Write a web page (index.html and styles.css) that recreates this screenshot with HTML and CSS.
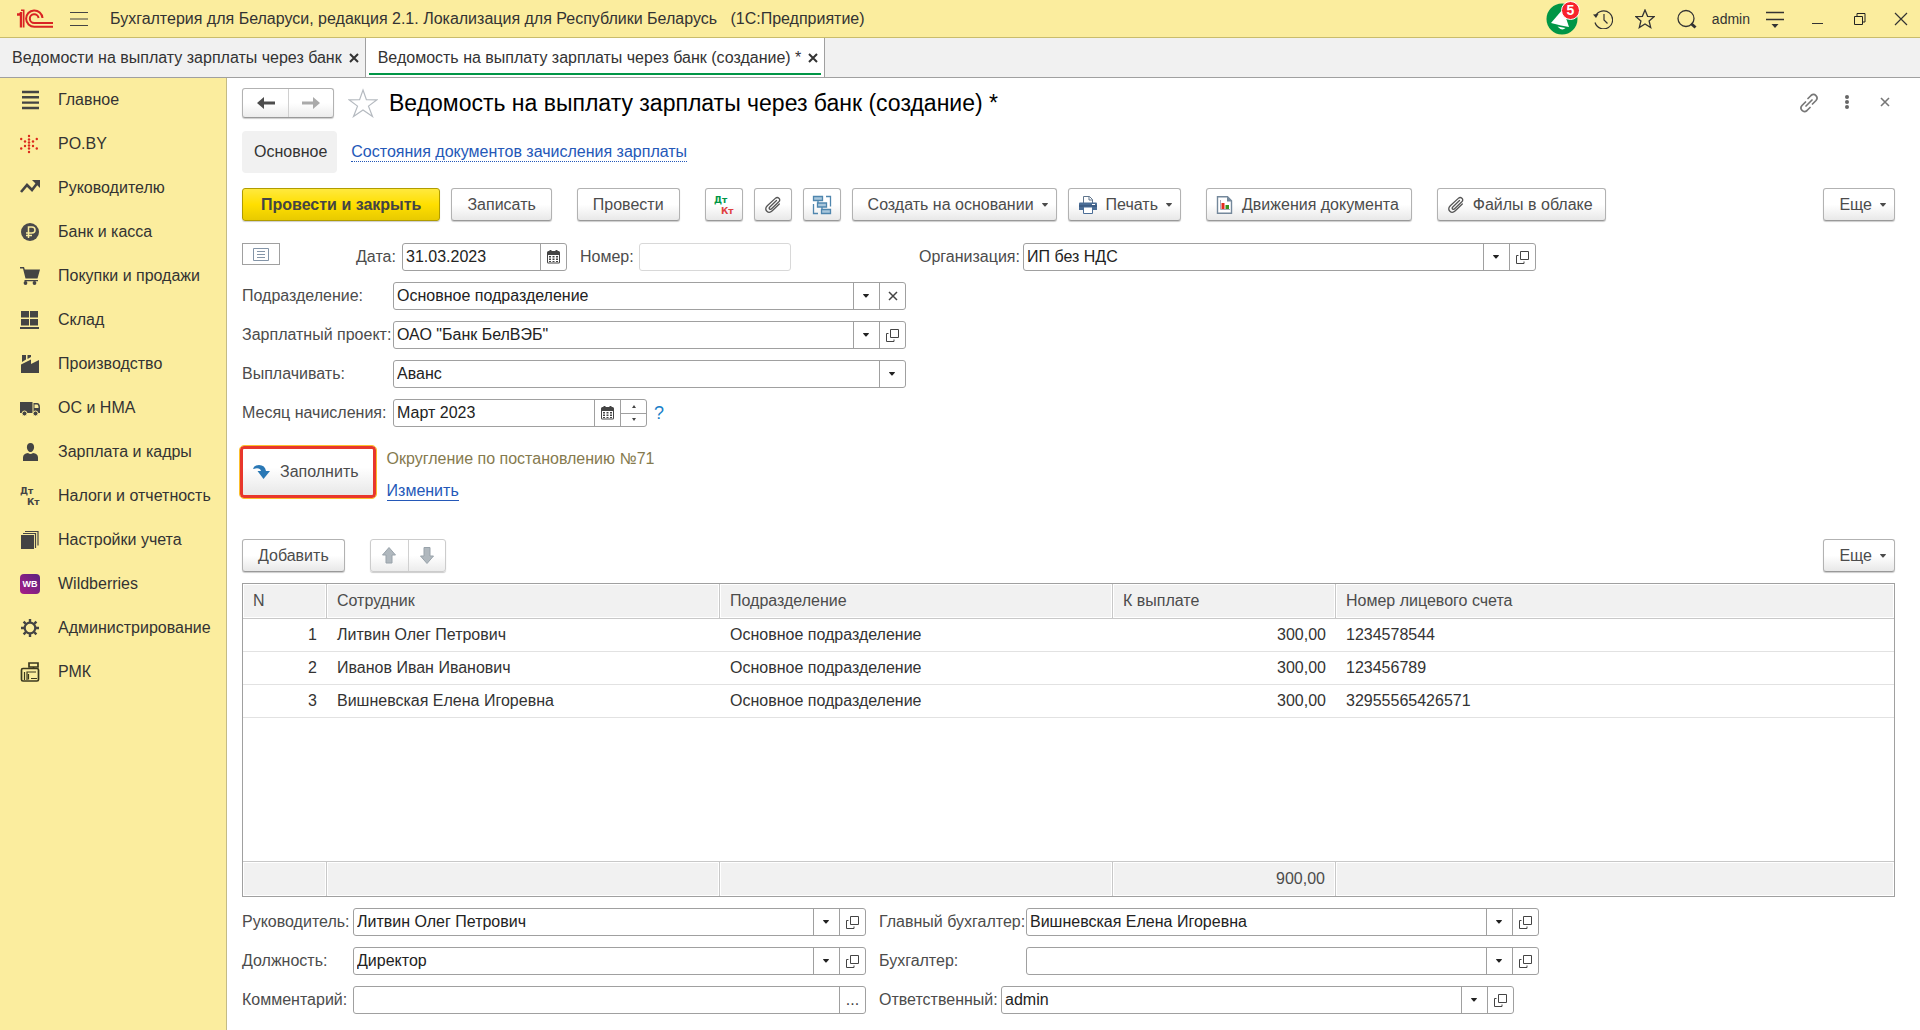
FILE: index.html
```
<!DOCTYPE html>
<html lang="ru">
<head>
    <meta charset="UTF-8">
    <meta name="viewport" content="width=device-width, initial-scale=1.0">
    <title>Ведомость на выплату зарплаты через банк (создание) *</title>
    <link rel="stylesheet" href="styles.css">
</head>
<body>
    <!-- Shared icons -->
    <svg class="sprite" width="0" height="0" aria-hidden="true">
        <symbol id="i-caret" viewBox="0 0 7 5"><path d="M0 0h7v1L4 4.500H3L0 1z" fill="currentColor"/></symbol>
        <symbol id="i-open" viewBox="0 0 13 13"><path d="M4.500 .5h8v8h-8zM2.500 4.500h-2v8h7.500v-2" fill="none" stroke="currentColor"/></symbol>
        <symbol id="i-x" viewBox="0 0 10 10"><path d="M1 1l8 8M9 1L1 9" fill="none" stroke="currentColor"/></symbol>
        <symbol id="i-calendar" viewBox="0 0 13 14">
            <path d="M1.500 1h1V0h2v1h4V0h2v1h1Q13 1 13 2.500v9.500q0 1.500-1.500 1.500h-10Q0 13.500 0 12V2.500Q0 1 1.500 1z" fill="#444"/>
            <path d="M1 5h11v7.500H1z" fill="#fff"/>
            <path d="M2 6h2v1.500H2zM5.500 6h2v1.500h-2zM9 6h2v1.500H9zM2 8.500h2V10H2zM5.500 8.500h2V10h-2zM9 8.500h2V10H9zM2 11h2v1H2zM5.500 11h2v1h-2zM9 11h2v1H9z" fill="#444"/>
        </symbol>
        <symbol id="i-clip" viewBox="0 0 18 18">
            <path d="M12.500 4.500L5.800 11c-1.500 1.500.3 3.300 1.800 1.800l7.200-7c2.400-2.600-1-5.800-3.500-3.400L3.300 9.800c-3.800 4 1 8.800 5 5l7-6.800" fill="none" stroke="#555" stroke-width="1.300" stroke-linecap="round"/>
        </symbol>
        <symbol id="i-star" viewBox="0 0 20 20"><path d="M10 1l2.600 6.300 6.400.4-4.900 4.200 1.600 6.600L10 14.900l-5.700 3.600 1.600-6.600L1 7.700l6.400-.4z" fill="none" stroke="currentColor" stroke-width="1.300"/></symbol>
    </svg>

    <header class="topbar">
        <svg class="logo" viewBox="0 0 38 20" fill="none" stroke="#d92323">
            <path d="M1 5.500h1.500q2.500 0 2.500-2.500V18.500" stroke-width="2.400"/>
            <path d="M5 1.200h2.700V18.500" stroke-width="1.600"/>
            <path d="M26.500 9a8.200 8.200 0 1 0-8.200 8.800H37" stroke-width="2"/>
            <path d="M22.600 9a4.400 4.400 0 1 0-4.400 5H37" stroke-width="2"/>
        </svg>
        <button class="icon-btn" aria-label="Меню"><svg width="20" height="20" viewBox="0 0 20 20"><path d="M1 3.500h18M1 10h18M1 16.500h18" stroke="#444" stroke-width="1.200"/></svg></button>
        <div class="app-title">Бухгалтерия для Беларуси, редакция 2.1. Локализация для Республики Беларусь &nbsp;&nbsp;(1С:Предприятие)</div>
        <button class="bell" aria-label="Уведомления">
            <svg width="32" height="32" viewBox="0 0 32 32"><circle cx="16" cy="16" r="15.500" fill="#009646"/><path d="M5 20L17 6l6 18-8-1.500z" fill="#fff"/><path d="M11.500 23.500l8 1.500q-3.500 3.500-8-1.500z" fill="#fff"/></svg>
            <span class="badge">5</span>
        </button>
        <div class="icon-group">
            <button class="icon-btn" aria-label="История"><svg width="20" height="20" viewBox="0 0 20 20" fill="none" stroke="#333" stroke-width="1.200"><path d="M2.500 7A9 9 0 1 1 2 13.500M11 5v6l3.500 3.500"/><path d="M0 5.500l5.500-.5L3 9z" fill="#333" stroke="none"/></svg></button>
            <button class="icon-btn" aria-label="Избранное"><svg width="20" height="20"><use href="#i-star"/></svg></button>
            <button class="icon-btn" aria-label="Поиск"><svg width="20" height="20" viewBox="0 0 20 20" fill="none" stroke="#333"><circle cx="9" cy="9.500" r="8" stroke-width="1.300"/><path d="M14 14.500l4.500 4" stroke-width="3"/></svg></button>
        </div>
        <span class="user">admin</span>
        <div class="icon-group">
            <button class="icon-btn" aria-label="Настройки"><svg width="20" height="20" viewBox="0 0 20 20"><path d="M1 3.500h18M1 10.500h18" stroke="#333" stroke-width="1.300"/><path d="M6.500 15h7L10 19z" fill="#333"/></svg></button>
            <button class="icon-btn" aria-label="Свернуть"><svg width="20" height="20" viewBox="0 0 20 20"><path d="M5 14.500h11" stroke="#333"/></svg></button>
            <button class="icon-btn" aria-label="Восстановить"><svg width="20" height="20" viewBox="0 0 20 20"><path d="M5.500 7.500h8v8h-8zM8 7V4.500h8v8.500h-2" fill="none" stroke="#222"/></svg></button>
            <button class="icon-btn" aria-label="Закрыть"><svg width="20" height="20" viewBox="0 0 20 20"><path d="M4 4l12 12M16 4L4 16" stroke="#333" stroke-width="1.200"/></svg></button>
        </div>
    </header>

    <div class="tabs">
        <div class="tab">
            <button class="tab-name">Ведомости на выплату зарплаты через банк</button>
            <button class="tab-close" aria-label="Закрыть вкладку"><svg width="10" height="10"><use href="#i-x"/></svg></button>
        </div>
        <div class="tab active">
            <button class="tab-name">Ведомость на выплату зарплаты через банк (создание) *</button>
            <button class="tab-close" aria-label="Закрыть вкладку"><svg width="10" height="10"><use href="#i-x"/></svg></button>
        </div>
    </div>

    <div class="layout">
        <nav class="sidebar">
            <a href="#"><svg viewBox="0 0 20 20"><path d="M2 2h17M2 7.300h17M2 12.600h17M2 18h17" stroke="#444" stroke-width="2.400"/></svg>Главное</a>
            <a href="#"><svg viewBox="0 0 20 20" fill="#dc2a1c"><circle cx="9" cy="2" r="1.200"/><circle cx="9" cy="5.500" r="1.200"/><circle cx="9" cy="8.500" r="1.200"/><circle cx="9" cy="11.500" r="1.200"/><circle cx="9" cy="14.500" r="1.200"/><circle cx="9" cy="18" r="1.200"/><circle cx="1.200" cy="5" r="1.200"/><circle cx="1.200" cy="14.500" r="1.200"/><circle cx="16.800" cy="5" r="1.200"/><circle cx="16.800" cy="14.500" r="1.200"/><circle cx="5" cy="7.500" r="1.200"/><circle cx="5" cy="12" r="1.200"/><circle cx="13" cy="7.500" r="1.200"/><circle cx="13" cy="12" r="1.200"/></svg>PO.BY</a>
            <a href="#"><svg viewBox="0 0 20 20"><path d="M1 14l6-7 5 5 5-6.500" fill="none" stroke="#444" stroke-width="2.600"/><path d="M12 2h8v8z" fill="#444"/></svg>Руководителю</a>
            <a href="#"><svg viewBox="0 0 20 20"><circle cx="10" cy="10" r="9" fill="#4a4a4a"/><path d="M8.500 16V5h3.500a2.500 2.500 0 0 1 0 6H6M6 13.500h6" fill="none" stroke="#fbed9e" stroke-width="1.500"/></svg>Банк и касса</a>
            <a href="#"><svg viewBox="0 0 20 20" fill="#444"><path d="M0 1h4l.8 2.500H20l-2.500 9H5.500L3 2.500H0zM4.500 14h13.500v1.200H4.500z"/><circle cx="5.500" cy="17" r="1.900"/><circle cx="14.500" cy="17" r="1.900"/></svg>Покупки и продажи</a>
            <a href="#"><svg viewBox="0 0 20 20" fill="#444"><path d="M1 1h8v6.500H1zM10 1h8v6.500h-8zM1 9h8v6.500H1zM10 9h8v6.500h-8zM0 17h19v2H0z"/></svg>Склад</a>
            <a href="#"><svg viewBox="0 0 20 20" fill="#444"><path d="M1 19v-8.500l10-5V10l8-4v13zM2 1h4v4.500L2 8zM7.500 1H11v2L7.500 5z"/></svg>Производство</a>
            <a href="#"><svg viewBox="0 0 20 20" fill="#444"><path d="M0 4h12.500v11H0zM13.500 5H17q3 0 3 4.500V15h-6.500z"/><path d="M14.500 6.500H17q1.500 0 1.500 3.500h-4z" fill="#fbed9e"/><circle cx="4.500" cy="15.500" r="2.500" stroke="#fbed9e"/><circle cx="15.500" cy="15.500" r="2.500" stroke="#fbed9e"/></svg>ОС и НМА</a>
            <a href="#"><svg viewBox="0 0 20 20" fill="#444"><path d="M10.500 1c2.500 0 3.600 1.700 3.600 4s-1.300 5-3.600 5-3.600-2.700-3.600-5 1.100-4 3.600-4zM3 19v-3.500Q3 11.500 8 11q2.500 2 5 0 5 .5 5 4.500V19z"/></svg>Зарплата и кадры</a>
            <a href="#"><svg viewBox="0 0 20 20" class="dtkt dark"><text x="0" y="8">Дт</text><text x="7" y="19">Кт</text></svg>Налоги и отчетность</a>
            <a href="#"><svg viewBox="0 0 20 20"><path d="M1 5h13v14H1z" fill="#444"/><path d="M3 3.500h12.500V18M5 1.500h13V15.500" fill="none" stroke="#444" stroke-width="1.200"/></svg>Настройки учета</a>
            <a href="#"><svg viewBox="0 0 20 20"><defs><linearGradient id="wb" x1="0" y1="1" x2="1" y2="0"><stop offset="0" stop-color="#a81d88"/><stop offset="1" stop-color="#5a2380"/></linearGradient></defs><rect width="20" height="20" rx="4" fill="url(#wb)"/><text x="10" y="13" text-anchor="middle" class="wb">WB</text></svg>Wildberries</a>
            <a href="#"><svg viewBox="0 0 20 20" fill="none" stroke="#444"><circle cx="10" cy="10" r="5.300" stroke-width="2.200"/><path d="M10 1v3M10 16v3M1 10h3M16 10h3M3.600 3.600l2.200 2.200M14.200 14.200l2.200 2.200M3.600 16.400l2.200-2.200M14.200 5.800l2.200-2.200" stroke-width="2.400"/></svg>Администрирование</a>
            <a href="#"><svg viewBox="0 0 20 20" fill="none" stroke="#3b391f"><rect x="1.500" y="6.500" width="17" height="12.500" rx="1.500" stroke-width="1.700"/><path d="M9 1h9v4H9zM13.500 5v2" stroke-width="1.700"/><path d="M4.500 18v-8M7 18v-8h9M8.500 12v5.500M11 16.500h6" stroke-width="1.200"/></svg>РМК</a>
        </nav>

        <main class="content">
            <div class="doc-head">
                <div class="split">
                    <button aria-label="Назад"><svg width="18" height="14" viewBox="0 0 18 14"><path d="M0 7l7-6V5.500h11v3H7V13z" fill="#4c4c4c"/></svg></button>
                    <button aria-label="Вперед"><svg width="18" height="14" viewBox="0 0 18 14"><path d="M18 7l-7-6V5.500H0v3h11V13z" fill="#aaa"/></svg></button>
                </div>
                <button class="icon-btn fav" aria-label="В избранное"><svg width="30" height="30" viewBox="0 0 30 30"><path d="M15 2l3.400 9.600 10.600.2-8.500 6.300 4 10.400L15 22l-9.500 6.500 4-10.400L1 11.800l10.600-.2z" fill="#fff" stroke="#b5bac0" stroke-width="1.200"/></svg></button>
                <h1>Ведомость на выплату зарплаты через банк (создание) *</h1>
                <div class="head-icons">
                    <button class="icon-btn" aria-label="Ссылка"><svg width="20" height="20" viewBox="0 0 20 20" fill="none" stroke="#777" stroke-width="1.700" stroke-linecap="round"><path d="M9 5.500l3-3c3.500-3 8 1.500 5 5l-3.500 3.500M11 14.500l-3 3c-3.500 3-8-1.500-5-5L6.500 9M7 13l6-6"/></svg></button>
                    <button class="icon-btn" aria-label="Меню формы"><svg width="20" height="20" viewBox="0 0 20 20" fill="#666"><circle cx="10" cy="4" r="2"/><circle cx="10" cy="9" r="2"/><circle cx="10" cy="14" r="2"/></svg></button>
                    <button class="icon-btn" aria-label="Закрыть форму"><svg width="20" height="20" viewBox="0 0 20 20"><path d="M6 5l8 8M14 5l-8 8" stroke="#777" stroke-width="1.600"/></svg></button>
                </div>
            </div>

            <div class="doc-nav">
                <span class="current">Основное</span>
                <a href="#">Состояния документов зачисления зарплаты</a>
            </div>

            <div class="toolbar">
                <div class="group">
                    <button class="btn primary">Провести и закрыть</button>
                    <button class="btn">Записать</button>
                </div>
                <button class="btn">Провести</button>
                <div class="group">
                    <button class="btn square" aria-label="Дт Кт"><svg width="20" height="20" viewBox="0 0 20 20" class="dtkt"><text x="0" y="8" fill="#009646">Дт</text><text x="7" y="19" fill="#e04040">Кт</text></svg></button>
                    <button class="btn square" aria-label="Файлы"><svg width="18" height="18"><use href="#i-clip"/></svg></button>
                    <button class="btn square" aria-label="Структура"><svg width="20" height="20" viewBox="0 0 20 20" fill="#a9c7dc" stroke="#4f86ae" stroke-width="1.300"><path d="M1.500 1.500h9v4h-9zM5.500 8h9v4h-9zM9.500 14.500h9v4h-9z"/><path d="M14 1.500h4.500v10M1.500 9v9.500H6M6 5.500V8M10 12v2.500" fill="none"/></svg></button>
                    <button class="btn drop">Создать на основании<svg class="caret" width="6" height="4"><use href="#i-caret"/></svg></button>
                    <button class="btn drop with-icon"><svg width="20" height="20" viewBox="0 0 20 20"><path d="M5.500 8V1.500h6l3 3V8" fill="#fff" stroke="#60758c"/><path d="M11 1.500V5h3.500" fill="none" stroke="#60758c"/><path d="M1 8.500Q1 7.500 2 7.500h16q1 0 1 1V15H1z" fill="#4a6d96"/><path d="M1 11h18" stroke="#2f4d72"/><path d="M5.500 12h9v6.500h-9z" fill="#fff" stroke="#4a6d96"/><path d="M14 9.500h3" stroke="#fff"/></svg>Печать<svg class="caret" width="6" height="4"><use href="#i-caret"/></svg></button>
                </div>
                <button class="btn with-icon"><svg width="18" height="18" viewBox="0 0 18 18"><path d="M1.500 .8h10l4 4v12.400h-14z" fill="#fff" stroke="#74889b" stroke-width="1.400"/><path d="M11 .5l5 5h-5z" fill="#74889b"/><path d="M4.500 4v9.500H14" fill="none" stroke="#aab"/><path d="M5.500 7h3v6h-3z" fill="#e32b1c"/><path d="M9.500 9h3.500v4H9.500z" fill="#37931f"/></svg>Движения документа</button>
                <button class="btn with-icon"><svg width="18" height="18"><use href="#i-clip"/></svg>Файлы в облаке</button>
                <button class="btn drop more">Еще<svg class="caret" width="6" height="4"><use href="#i-caret"/></svg></button>
            </div>

            <form class="fields">
                <div class="row">
                    <div class="first-half">
                        <button type="button" class="list-btn" aria-label="Показать список"><svg width="16" height="13" viewBox="0 0 16 13"><path d="M.5 .5h15v12H.5zM4 3.500h8M4 6.500h8M4 9.500h8" fill="none" stroke="#8495a8"/></svg></button>
                        <label class="l-date" for="date">Дата:</label>
                        <div class="field w-date">
                            <input type="text" id="date" value="31.03.2023">
                            <button type="button" aria-label="Календарь"><svg width="13" height="14"><use href="#i-calendar"/></svg></button>
                        </div>
                        <label class="l-number" for="number">Номер:</label>
                        <div class="field w-number off"><input type="text" id="number" disabled></div>
                    </div>
                    <label class="l-org" for="org">Организация:</label>
                    <div class="field">
                        <div class="pick"><select id="org"><option>ИП без НДС</option></select><svg width="6" height="4"><use href="#i-caret"/></svg></div>
                        <button type="button" aria-label="Открыть"><svg width="13" height="13"><use href="#i-open"/></svg></button>
                    </div>
                </div>
                <div class="row">
                    <label class="l-main" for="dept">Подразделение:</label>
                    <div class="field">
                        <div class="pick"><select id="dept"><option>Основное подразделение</option></select><svg width="6" height="4"><use href="#i-caret"/></svg></div>
                        <button type="button" class="clear" aria-label="Очистить"><svg width="10" height="10"><use href="#i-x"/></svg></button>
                    </div>
                </div>
                <div class="row">
                    <label class="l-main" for="project">Зарплатный проект:</label>
                    <div class="field">
                        <div class="pick"><select id="project"><option>ОАО "Банк БелВЭБ"</option></select><svg width="6" height="4"><use href="#i-caret"/></svg></div>
                        <button type="button" aria-label="Открыть"><svg width="13" height="13"><use href="#i-open"/></svg></button>
                    </div>
                </div>
                <div class="row">
                    <label class="l-main" for="pay">Выплачивать:</label>
                    <div class="field">
                        <div class="pick"><select id="pay"><option>Аванс</option></select><svg width="6" height="4"><use href="#i-caret"/></svg></div>
                    </div>
                </div>
                <div class="row">
                    <label class="l-main" for="month">Месяц начисления:</label>
                    <div class="field w-month">
                        <input type="text" id="month" value="Март 2023">
                        <button type="button" aria-label="Календарь"><svg width="13" height="14"><use href="#i-calendar"/></svg></button>
                        <div class="spin">
                            <button type="button" aria-label="Больше"><svg width="4" height="3" viewBox="0 0 4 3"><path d="M0 3l2-3 2 3z" fill="#444"/></svg></button>
                            <button type="button" aria-label="Меньше"><svg width="4" height="3" viewBox="0 0 4 3"><path d="M0 0l2 3 2-3z" fill="#444"/></svg></button>
                        </div>
                    </div>
                    <button type="button" class="help">?</button>
                </div>
            </form>

            <div class="fill-row">
                <button class="fill-btn"><svg width="18" height="16" viewBox="0 0 18 16"><path d="M0 5Q1 1 6 1q6 0 7 6h4l-6.500 8L4.500 7H8Q7 3 0 5z" fill="#2a78b5"/></svg>Заполнить</button>
                <div class="fill-info">
                    <span>Округление по постановлению №71</span>
                    <a href="#">Изменить</a>
                </div>
            </div>

            <div class="toolbar">
                <button class="btn">Добавить</button>
                <div class="split light">
                    <button aria-label="Вверх"><svg width="14" height="17" viewBox="0 0 14 17"><path d="M7 .5l6.500 7.500H10v8H4V8H.5z" fill="#b0b8be" stroke="#98a2aa"/></svg></button>
                    <button aria-label="Вниз"><svg width="14" height="17" viewBox="0 0 14 17"><path d="M7 16.500L13.500 9H10V.5H4V9H.5z" fill="#b0b8be" stroke="#98a2aa"/></svg></button>
                </div>
                <button class="btn drop more">Еще<svg class="caret" width="6" height="4"><use href="#i-caret"/></svg></button>
            </div>

            <div class="table-box">
                <table>
                    <colgroup><col class="c-n"><col class="c-name"><col class="c-name"><col class="c-sum"><col></colgroup>
                    <thead>
                        <tr><th>N</th><th>Сотрудник</th><th>Подразделение</th><th>К выплате</th><th>Номер лицевого счета</th></tr>
                    </thead>
                    <tbody>
                        <tr><td class="num">1</td><td>Литвин Олег Петрович</td><td>Основное подразделение</td><td class="num">300,00</td><td>1234578544</td></tr>
                        <tr><td class="num">2</td><td>Иванов Иван Иванович</td><td>Основное подразделение</td><td class="num">300,00</td><td>123456789</td></tr>
                        <tr><td class="num">3</td><td>Вишневская Елена Игоревна</td><td>Основное подразделение</td><td class="num">300,00</td><td>32955565426571</td></tr>
                        <tr class="rest"><td colspan="5"></td></tr>
                    </tbody>
                    <tfoot>
                        <tr><td></td><td></td><td></td><td class="num">900,00</td><td></td></tr>
                    </tfoot>
                </table>
            </div>

            <form class="fields">
                <div class="row">
                    <label class="l-sign" for="head">Руководитель:</label>
                    <div class="field">
                        <div class="pick"><select id="head"><option>Литвин Олег Петрович</option></select><svg width="6" height="4"><use href="#i-caret"/></svg></div>
                        <button type="button" aria-label="Открыть"><svg width="13" height="13"><use href="#i-open"/></svg></button>
                    </div>
                    <label class="l-second" for="chief">Главный бухгалтер:</label>
                    <div class="field">
                        <div class="pick"><select id="chief"><option>Вишневская Елена Игоревна</option></select><svg width="6" height="4"><use href="#i-caret"/></svg></div>
                        <button type="button" aria-label="Открыть"><svg width="13" height="13"><use href="#i-open"/></svg></button>
                    </div>
                </div>
                <div class="row">
                    <label class="l-sign" for="post">Должность:</label>
                    <div class="field">
                        <div class="pick"><select id="post"><option>Директор</option></select><svg width="6" height="4"><use href="#i-caret"/></svg></div>
                        <button type="button" aria-label="Открыть"><svg width="13" height="13"><use href="#i-open"/></svg></button>
                    </div>
                    <label class="l-second" for="accountant">Бухгалтер:</label>
                    <div class="field">
                        <div class="pick"><select id="accountant"><option></option></select><svg width="6" height="4"><use href="#i-caret"/></svg></div>
                        <button type="button" aria-label="Открыть"><svg width="13" height="13"><use href="#i-open"/></svg></button>
                    </div>
                </div>
                <div class="row">
                    <label class="l-sign" for="comment">Комментарий:</label>
                    <div class="field">
                        <input type="text" id="comment">
                        <button type="button">...</button>
                    </div>
                    <label class="l-resp" for="resp">Ответственный:</label>
                    <div class="field">
                        <div class="pick"><select id="resp"><option>admin</option></select><svg width="6" height="4"><use href="#i-caret"/></svg></div>
                        <button type="button" aria-label="Открыть"><svg width="13" height="13"><use href="#i-open"/></svg></button>
                    </div>
                </div>
            </form>
        </main>
    </div>
</body>
</html>
```

FILE: styles.css
```
* {
    box-sizing: border-box;
}

body {
    margin: 0;
    height: 100vh;
    display: flex;
    flex-direction: column;
    font-family: "Liberation Sans", Arial, sans-serif;
    font-size: 16px;
    line-height: 20px;
    color: #333;
    background: #fff;
}

button,
input,
select {
    font: inherit;
    color: inherit;
    margin: 0;
    padding: 0;
    border: 0;
    background: none;
}

button {
    display: flex;
    align-items: center;
    justify-content: center;
    white-space: nowrap;
    cursor: pointer;
}

svg {
    flex: none;
    display: block;
}

.sprite {
    position: absolute;
}

/* Top bar */
.topbar {
    height: 38px;
    display: flex;
    align-items: center;
    gap: 15px;
    padding: 0 9px 0 16px;
    background: #fbed9e;
    border-bottom: 1px solid #c9bc6c;
}

.logo {
    width: 38px;
    height: 20px;
}

.app-title {
    flex: 1;
    padding-left: 6px;
    white-space: nowrap;
}

.bell {
    position: relative;
}

.badge {
    position: absolute;
    top: -2px;
    right: -2px;
    width: 19px;
    height: 19px;
    border: 1px solid #fff;
    border-radius: 50%;
    background: #f8232c;
    color: #fff;
    font-size: 14px;
    font-weight: bold;
    line-height: 17px;
    text-align: center;
}

.icon-group {
    display: flex;
    gap: 22px;
}

.user {
    font-size: 14px;
}

/* Window tabs */
.tabs {
    height: 40px;
    display: flex;
    background: #f1f1f1;
    border-bottom: 1px solid #a0a0a0;
}

.tab {
    display: flex;
    align-items: center;
    gap: 7px;
    padding: 0 6px 0 12px;
    border-right: 1px solid #a0a0a0;
}

.tab.active {
    background: #fff linear-gradient(#009646, #009646) no-repeat 50% 35px / calc(100% - 6px) 2px;
}

.tab-close svg {
    stroke-width: 2;
}

.layout {
    flex: 1;
    min-height: 0;
    display: flex;
}

/* Sections */
.sidebar {
    flex: none;
    width: 227px;
    background: #fbed9e;
    border-right: 1px solid #c4bb85;
}

.sidebar a {
    height: 44px;
    display: flex;
    align-items: center;
    gap: 18px;
    padding-left: 20px;
    color: #333;
    text-decoration: none;
}

.sidebar svg {
    width: 20px;
    height: 20px;
}

.dtkt text {
    font-family: "DejaVu Sans", sans-serif;
    font-size: 9px;
    font-weight: bold;
}

.dark {
    fill: #444;
}

.wb {
    font-size: 9px;
    font-weight: bold;
    fill: #fff;
}

/* Document form */
.content {
    flex: 1;
    min-width: 0;
    display: flex;
    flex-direction: column;
    padding: 10px 25px 16px 15px;
}

.doc-head {
    display: flex;
    align-items: center;
}

.split {
    display: flex;
    border: 1px solid #b2b2b2;
    border-bottom-color: #999;
    border-radius: 3px;
    background: linear-gradient(#fff 50%, #ececec);
    box-shadow: 0 1px 1px #ccc;
}

.split button {
    width: 45px;
    height: 28px;
}

.split button + button {
    border-left: 1px solid #d0d0d0;
}

.fav {
    margin: 0 11px 0 14px;
}

h1 {
    margin: 0;
    font-size: 23px;
    font-weight: normal;
    line-height: 30px;
    color: #000;
}

.head-icons {
    display: flex;
    gap: 18px;
    margin-left: auto;
}

.doc-nav {
    display: flex;
    align-items: center;
    gap: 14px;
    margin: 13px 0 15px;
}

.doc-nav .current {
    padding: 11px 10px 11px 12px;
    border-radius: 4px;
    background: #f1f1f1;
}

a {
    color: #2458b8;
}

.doc-nav a {
    line-height: 18px;
    text-decoration: none;
    border-bottom: 1px dotted #2458b8;
}

.toolbar {
    display: flex;
    gap: 25px;
}

.group {
    display: flex;
    gap: 11px;
}

.btn {
    height: 33px;
    padding: 0 15px;
    border: 1px solid #b2b2b2;
    border-bottom-color: #999;
    border-radius: 3px;
    background: linear-gradient(#fff 50%, #e8e8e8);
    box-shadow: 0 1px 1px #ccc;
    color: #4c4c4c;
}

.btn.primary {
    padding: 0 18px;
    border-color: #b09c00;
    background: linear-gradient(#ffe93e, #ffdf00 50%, #e8ca00);
    color: #444;
    font-weight: bold;
}

.btn.square {
    width: 38px;
    padding: 0;
}

.btn.with-icon {
    gap: 8px;
    padding: 0 12px 0 9px;
}

.btn.drop {
    gap: 8px;
    padding-right: 8px;
}

.caret {
    width: 6px;
}

.more {
    margin-left: auto;
}

/* Fields */
.fields {
    display: flex;
    flex-direction: column;
    gap: 11px;
}

.toolbar + .fields {
    margin-top: 22px;
}

.row,
.first-half {
    display: flex;
    align-items: center;
}

.first-half {
    width: 677px;
}

label {
    color: #4c4c4c;
    white-space: nowrap;
}

.list-btn {
    width: 38px;
    height: 22px;
    align-self: flex-start;
    border: 1px solid #a0a0a0;
}

.l-date {
    width: 122px;
    padding-left: 76px;
}

.l-number {
    width: 72px;
    padding-left: 13px;
}

.l-org {
    width: 104px;
}

.l-main {
    width: 151px;
}

.l-sign {
    width: 111px;
}

.l-second {
    width: 160px;
    padding-left: 13px;
}

.l-resp {
    width: 135px;
    padding-left: 13px;
}

.field {
    width: 513px;
    height: 28px;
    display: flex;
    border: 1px solid #a0a0a0;
    border-radius: 3px;
    color: #222;
}

.field.off {
    border-color: #d8d8d8;
}

.w-date {
    width: 165px;
}

.w-number {
    width: 152px;
}

.w-month {
    width: 254px;
}

.field input,
.pick {
    flex: 1;
    min-width: 0;
}

.field input,
.field select {
    padding: 0 3px;
}

.pick {
    display: grid;
    grid-template-columns: 1fr 26px;
    align-items: center;
    justify-items: center;
    background: linear-gradient(#a0a0a0, #a0a0a0) no-repeat right 25px top / 1px 100%;
}

.pick select {
    grid-area: 1 / 1 / 2 / 3;
    width: 100%;
    height: 26px;
    appearance: none;
}

.pick svg {
    grid-area: 1 / 2;
    pointer-events: none;
}

.field button {
    width: 26px;
    border-left: 1px solid #a0a0a0;
    color: #444;
}

.clear svg {
    stroke-width: 1.5;
}

.spin {
    display: flex;
    flex-direction: column;
}

.field .spin button {
    flex: 1;
}

.spin button + button {
    border-top: 1px solid #a0a0a0;
}

.help {
    margin-left: 7px;
    font-size: 18px;
    color: #1a7fc8;
}

/* Fill block */
.fill-row {
    display: flex;
    gap: 11px;
    margin: 19px 0 38px -2px;
}

.fill-btn {
    height: 52px;
    gap: 9px;
    padding: 0 14px 0 10px;
    border: 3px solid #e8372c;
    border-radius: 4px;
    outline: 1px solid #fbc02d;
    background: linear-gradient(#fff 40%, #e8e8e8);
    color: #4c4c4c;
}

.fill-info {
    display: flex;
    flex-direction: column;
    align-items: flex-start;
    gap: 12px;
    padding-top: 3px;
    color: #857a4e;
}

.fill-info a {
    line-height: 19px;
    text-decoration: none;
    border-bottom: 1px solid #2458b8;
}

.split.light {
    border-color: #ccc;
}

.split.light button {
    width: 37px;
    height: 31px;
}

/* Employees table */
.table-box {
    flex: 1;
    min-height: 0;
    margin: 11px 0;
    border: 1px solid #a0a0a0;
}

table {
    width: 100%;
    height: 100%;
    table-layout: fixed;
    border-collapse: separate;
    border-spacing: 0;
}

.c-n {
    width: 84px;
}

.c-name {
    width: 393px;
}

.c-sum {
    width: 223px;
}

th,
td {
    height: 33px;
    padding: 0 10px;
    text-align: left;
    font-weight: normal;
    border-bottom: 1px solid #e2e2e2;
}

th,
tfoot td {
    height: 35px;
    background: #f1f1f1;
    color: #4c4c4c;
    border-right: 1px solid #c8c8c8;
    border-bottom: 1px solid #c8c8c8;
    box-shadow: inset 0 0 0 1px #fff;
}

tfoot td {
    border-top: 1px solid #c8c8c8;
    border-bottom: 0;
}

th:last-child,
tfoot td:last-child {
    border-right: 0;
}

td.num {
    text-align: right;
}

.rest td {
    height: auto;
    border: 0;
}
```
